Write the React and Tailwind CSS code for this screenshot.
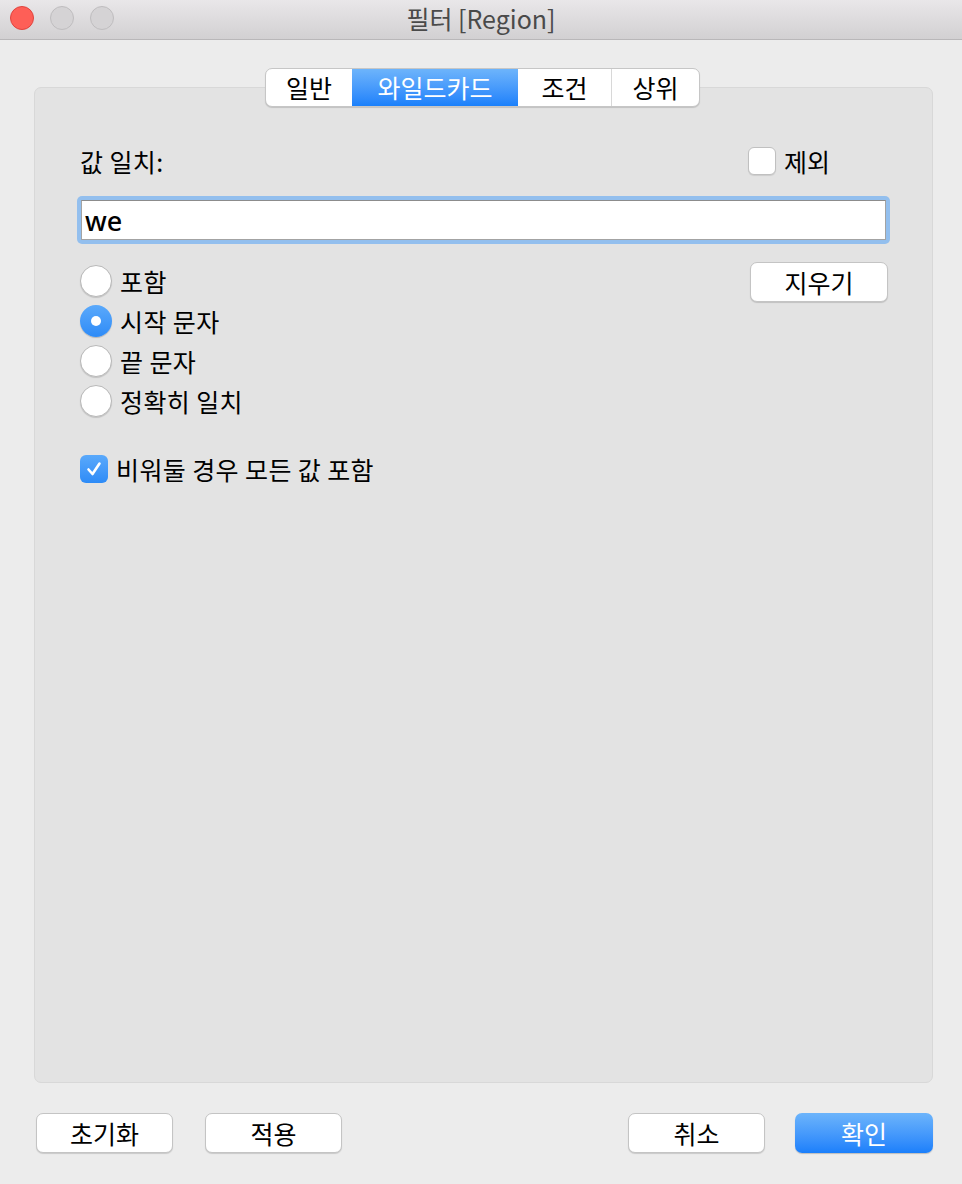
import React from "react";

const KR = "font-['Noto_Sans_CJK_KR','Noto_Sans',sans-serif]";

function Radio({ checked, label }) {
  return (
    <div className="flex h-[40px] items-center">
      {checked ? (
        <span className="flex h-[32px] w-[32px] items-center justify-center rounded-full bg-gradient-to-b from-[#5aa9fb] to-[#2d8bf7] shadow-[0_1px_1px_rgba(0,0,0,0.2)]">
          <span className="h-[10px] w-[10px] rounded-full bg-white" />
        </span>
      ) : (
        <span className="h-[32px] w-[32px] rounded-full border border-[#b8b8b8] bg-white shadow-[0_1px_1px_rgba(0,0,0,0.15)]" />
      )}
      <span className="ml-[8px] text-[25px] tracking-[0.4px] leading-none text-black">{label}</span>
    </div>
  );
}

function Button({ children, primary }) {
  return (
    <button
      className={
        primary
          ? "flex h-[40px] w-[138px] items-center justify-center rounded-[7px] bg-gradient-to-b from-[#6cb4fb] to-[#1a7ffb] text-[25px] leading-none text-white shadow-[0_1px_1px_rgba(0,0,0,0.2)]"
          : "flex h-[40px] w-[137px] items-center justify-center rounded-[7px] border border-[#c4c4c4] bg-white text-[25px] leading-none text-black shadow-[0_1px_1px_rgba(0,0,0,0.15)]"
      }
    >
      {children}
    </button>
  );
}

export default function App() {
  const tabs = ["일반", "와일드카드", "조건", "상위"];
  const tabW = ["w-[86px]", "w-[166px]", "w-[93px]", "w-[88px]"];

  return (
    <div className={`flex h-[1184px] w-[962px] flex-col bg-[#ececec] ${KR}`}>
      {/* title bar */}
      <div className="relative flex h-[40px] shrink-0 items-center justify-center border-b border-[#b9b7b9] bg-gradient-to-b from-[#e9e7e9] to-[#d2d0d2]">
        <div className="absolute left-[10px] top-[6px] flex gap-[16px]">
          <span className="h-[24px] w-[24px] rounded-full border border-[#e0443e] bg-[#fe5f57]" />
          <span className="h-[24px] w-[24px] rounded-full border border-[#bfbdbf] bg-[#d5d3d5]" />
          <span className="h-[24px] w-[24px] rounded-full border border-[#bfbdbf] bg-[#d5d3d5]" />
        </div>
        <span className="mb-[3px] text-[25px] leading-none text-[#4a4a4a]">필터 [Region]</span>
      </div>

      {/* tabs */}
      <div className="relative z-10 mt-[28px] flex justify-center pl-[3px]">
        <div className="flex h-[39px] overflow-hidden rounded-[7px] border border-[#c6c6c6] bg-white shadow-[0_1px_1px_rgba(0,0,0,0.15)]">
          {tabs.map((t, i) => (
            <div
              key={t}
              className={`${tabW[i]} flex items-center justify-center text-[25px] leading-none ${
                i === 1
                  ? "bg-gradient-to-b from-[#6db4fb] to-[#1a80fb] text-white"
                  : "text-black"
              } ${i === 3 ? "border-l border-[#d8d8d8]" : ""}`}
            >
              {t}
            </div>
          ))}
        </div>
      </div>

      {/* panel */}
      <div className="ml-[34px] mr-[29px] -mt-[20px] flex flex-1 flex-col rounded-[7px] border border-[#d8d8d8] bg-[#e3e3e3] pl-[45px] pr-[44px] pt-[59px]">
        <div className="flex h-[28px] items-center justify-between">
          <span className="text-[25px] tracking-[0.4px] leading-none text-black">값 일치:</span>
          <div className="mr-[58px] flex items-center">
            <span className="h-[28px] w-[28px] rounded-[6px] border border-[#c0c0c0] bg-white shadow-[0_1px_1px_rgba(0,0,0,0.1)]" />
            <span className="ml-[8px] text-[25px] leading-none text-black">제외</span>
          </div>
        </div>

        <div className="-ml-[3px] -mr-[2px] mt-[21px] h-[48px] rounded-[5px] bg-[#93bfee] p-[4px]">
          <div className="flex h-full items-center border border-[#a3a3a3] border-t-[#8c8c8c] bg-white pl-[3px]">
            <span className="font-['Noto_Sans',sans-serif] text-[27px] font-medium leading-none text-black">
              we
            </span>
          </div>
        </div>

        <div className="mt-[17px] flex items-start justify-between">
          <div className="flex flex-col">
            <Radio label="포함" />
            <Radio label="시작 문자" checked />
            <Radio label="끝 문자" />
            <Radio label="정확히 일치" />
          </div>
          <div className="mt-[1px]">
            <button className="flex h-[40px] w-[138px] items-center justify-center rounded-[7px] border border-[#c4c4c4] bg-white text-[25px] leading-none text-black shadow-[0_1px_1px_rgba(0,0,0,0.15)]">
              지우기
            </button>
          </div>
        </div>

        <div className="mt-[34px] flex h-[28px] items-center">
          <span className="flex h-[28px] w-[28px] items-center justify-center rounded-[6px] bg-gradient-to-b from-[#5aa9fb] to-[#2d8bf7]">
            <svg width="18" height="18" viewBox="0 0 18 18" fill="none">
              <path d="M3.5 9.5 L7.5 14 L14.5 3.5" stroke="white" strokeWidth="2.6" strokeLinecap="round" strokeLinejoin="round" />
            </svg>
          </span>
          <span className="ml-[8px] text-[25px] tracking-[0.4px] leading-none text-black">비워둘 경우 모든 값 포함</span>
        </div>
      </div>

      {/* footer buttons */}
      <div className="mb-[31px] mt-[30px] flex h-[40px] items-center pl-[36px] pr-[29px]">
        <Button>초기화</Button>
        <div className="ml-[32px]">
          <Button>적용</Button>
        </div>
        <div className="flex-1" />
        <Button>취소</Button>
        <div className="ml-[30px]">
          <Button primary>확인</Button>
        </div>
      </div>
    </div>
  );
}
